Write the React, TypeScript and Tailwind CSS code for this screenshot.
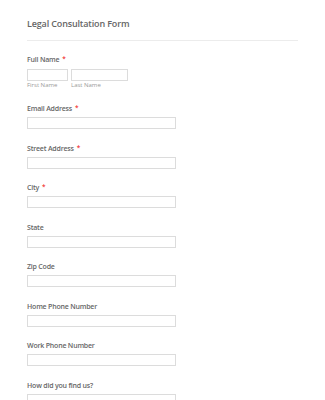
import React from "react";

const font = { fontFamily: '"Open Sans", "DejaVu Sans", sans-serif' };

function Label({ text, required }: { text: string; required?: boolean }) {
  return (
    <div className="h-[10px] pt-[1px] leading-[10px] text-[7px] font-semibold tracking-[-0.2px] text-[#666]">
      {text}
      {required && <span className="ml-[3px] text-[6.5px] align-top leading-[8px] text-[#f23a3c]">*</span>}
    </div>
  );
}

function Field({ label, required }: { label: string; required?: boolean }) {
  return (
    <div className="flex flex-col gap-[4px]">
      <Label text={label} required={required} />
      <div className="h-[12px] w-[149px] border border-[#dcdcdc] bg-white" />
    </div>
  );
}

export default function App() {
  const fields: [string, boolean][] = [
    ["Street Address", true],
    ["City", true],
    ["State", false],
    ["Zip Code", false],
    ["Home Phone Number", false],
    ["Work Phone Number", false],
    ["How did you find us?", false],
  ];
  return (
    <div className="h-[400px] w-[325px] overflow-hidden bg-white" style={font}>
      <div className="px-[27px] pt-[16px]">
        <div className="h-[14px] pt-[1px] leading-[13px] text-[9px] font-semibold tracking-[-0.15px] text-[#666]">
          Legal Consultation Form
        </div>
        <div className="mt-[10px] h-px w-[271px] bg-[#ececec]" />
        <div className="mt-[13px] flex flex-col">
          <Label text="Full Name" required />
          <div className="mt-[5px] flex gap-[3px]">
            <div className="flex flex-col">
              <div className="h-[12px] w-[41px] border border-[#dcdcdc]" />
              <div className="mt-[1px] h-[7px] leading-[7px] text-[6px] text-[#9a9a9a]">First Name</div>
            </div>
            <div className="flex flex-col">
              <div className="h-[12px] w-[57px] border border-[#dcdcdc]" />
              <div className="mt-[1px] h-[7px] leading-[7px] text-[6px] text-[#9a9a9a]">Last Name</div>
            </div>
          </div>
          <div className="mt-[14px] flex flex-col gap-[13.5px]">
            <Field label="Email Address" required />
            {fields.map(([l, r]) => (
              <Field key={l} label={l} required={r} />
            ))}
          </div>
        </div>
      </div>
    </div>
  );
}
